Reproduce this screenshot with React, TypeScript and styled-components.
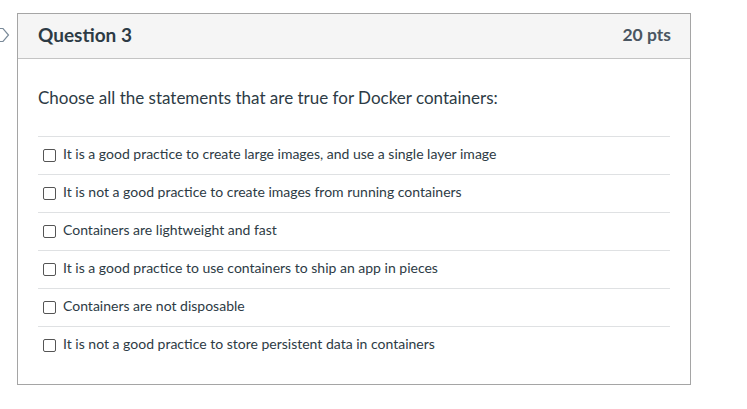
import React from 'react';
import styled, { createGlobalStyle } from 'styled-components';

const answers = [
  'It is a good practice to create large images, and use a single layer image',
  'It is not a good practice to create images from running containers',
  'Containers are lightweight and fast',
  'It is a good practice to use containers to ship an app in pieces',
  'Containers are not disposable',
  'It is not a good practice to store persistent data in containers',
];

export default function App() {
  return (
    <>
      <Global />
      <Page>
        <Marker width="10" height="16" viewBox="0 0 10 16">
          <path d="M-4 1.5 H3 L8.5 8 L3 14.5 H-4" fill="none" stroke="#7a8a99" strokeWidth="1.2" />
        </Marker>
        <Card>
          <Header>
            <Title>Question 3</Title>
            <Points>20 pts</Points>
          </Header>
          <Body>
            <QuestionText>Choose all the statements that are true for Docker containers:</QuestionText>
            <Answers>
              {answers.map((a) => (
                <Answer key={a}>
                  <Box />
                  <AnswerText>{a}</AnswerText>
                </Answer>
              ))}
            </Answers>
          </Body>
        </Card>
      </Page>
    </>
  );
}

const Global = createGlobalStyle`
  body {
    margin: 0;
    background: #fff;
    font-family: Lato, "Open Sans", sans-serif;
    color: #2d3b45;
  }
`;

const Page = styled.div`
  position: relative;
  width: 747px;
  height: 409px;
  padding: 13px 0 0 17px;
  box-sizing: border-box;
`;

const Marker = styled.svg`
  position: absolute;
  left: 0;
  top: 27px;
`;

const Card = styled.div`
  width: 674px;
  border: 1px solid #a5a5a5;
  box-sizing: border-box;
`;

const Header = styled.div`
  height: 41px;
  background: #f5f5f5;
  border-bottom: 1px solid #c4c4c4;
  display: flex;
  align-items: center;
  justify-content: space-between;
  padding: 0 19px 3px 20px;
`;

const Title = styled.div`
  font-size: 19px;
  font-weight: 700;
  color: #2d3b45;
`;

const Points = styled.div`
  font-size: 17.5px;
  font-weight: 700;
  color: #4a5661;
`;

const Body = styled.div`
  padding: 29px 20px 20px 20px;
`;

const QuestionText = styled.div`
  font-size: 17px;
  line-height: 20px;
  color: #2d3b45;
  margin-bottom: 28px;
`;

const Answers = styled.div`
  display: flex;
  flex-direction: column;
`;

const Answer = styled.label`
  display: flex;
  align-items: center;
  height: 32px;
  padding: 0 0 5px 5px;
  border-top: 1px solid #dfe1e3;
`;

const Box = styled.span`
  width: 11px;
  height: 11px;
  margin-top: 4px;
  border: 1px solid #555;
  border-radius: 2px;
  background: #fff;
  margin-right: 7px;
  flex-shrink: 0;
`;

const AnswerText = styled.span`
  font-size: 14px;
  color: #2d3b45;
`;
